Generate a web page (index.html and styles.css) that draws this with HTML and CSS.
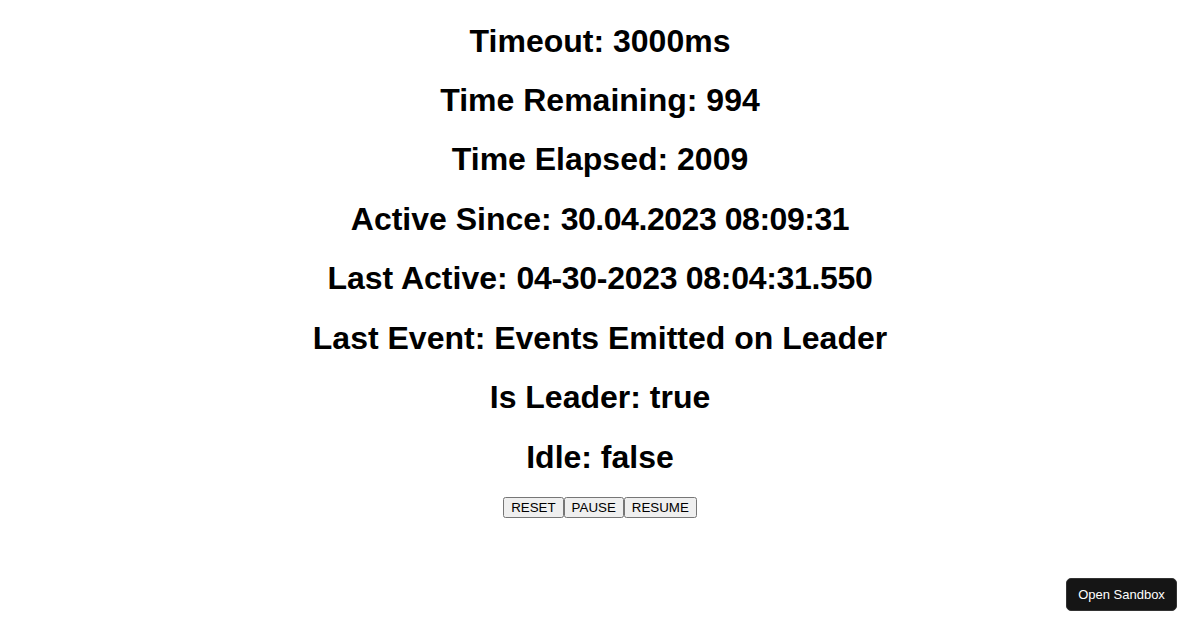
FILE: index.html
```html
<!DOCTYPE html>
<html>
<head>
<meta charset="utf-8">
<link rel="stylesheet" href="styles.css">
</head>
<body>
<div class="app">
<h1 class="stat">Timeout: 3000ms</h1>
<h1 class="stat">Time Remaining: 994</h1>
<h1 class="stat">Time Elapsed: 2009</h1>
<h1 class="stat">Active Since: <span class="tight">30.04.2023 08:09:31</span></h1>
<h1 class="stat">Last Active: <span class="tight-sm">04-30-2023 08:04:31.550</span></h1>
<h1 class="stat">Last Event: Events Emitted on Leader</h1>
<h1 class="stat">Is Leader: true</h1>
<h1 class="stat">Idle: false</h1>
<div class="controls"><button class="ctl">RESET</button><button class="ctl">PAUSE</button><button class="ctl">RESUME</button></div>
</div>
<button class="sandbox">Open Sandbox</button>
</body>
</html>
```
FILE: styles.css
```css
body {
  margin: 0 8px;
  font-family: "Liberation Sans", Arial, sans-serif;
  background: #fff;
  color: #000;
}
.app {
  text-align: center;
  padding-top: 0.1px;
}
.stat {
  font-size: 32px;
  font-weight: bold;
  line-height: 38px;
  margin: 21.44px 0;
}
.tight {
  letter-spacing: -0.45px;
}
.tight-sm {
  letter-spacing: -0.3px;
}
.controls {
  display: flex;
  justify-content: center;
}
.ctl {
  font-family: "Liberation Sans", Arial, sans-serif;
  font-size: 13.33px;
  margin: 0;
}
.sandbox {
  position: fixed;
  right: 23px;
  bottom: 19px;
  width: 111px;
  height: 33px;
  background: #151515;
  color: #fff;
  border: 1px solid #333;
  border-radius: 5px;
  font-family: "Liberation Sans", Arial, sans-serif;
  font-size: 13px;
  padding: 0;
}
```
